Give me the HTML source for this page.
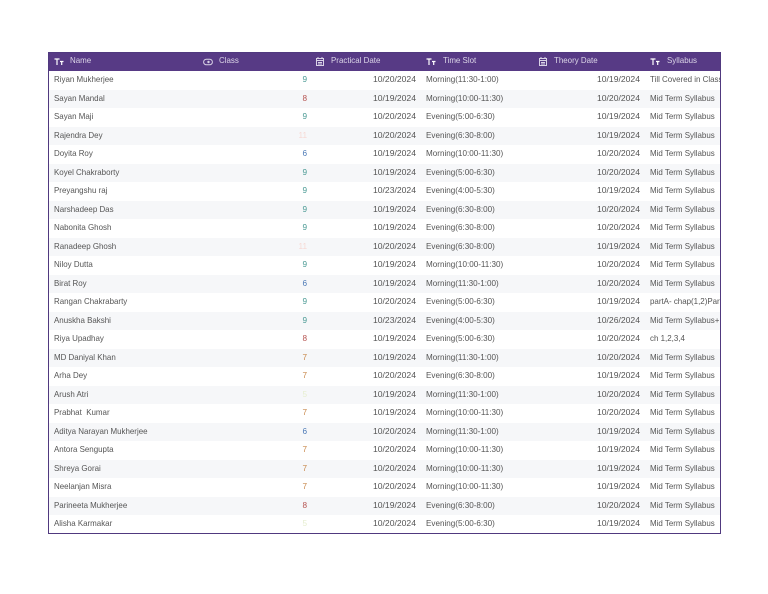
<!DOCTYPE html>
<html><head><meta charset="utf-8"><style>
html,body{margin:0;padding:0;background:#fff;width:768px;height:594px;overflow:hidden}
.w{position:absolute;left:48px;top:52px;width:671px;height:480px;border:1px solid #50397f;overflow:hidden;background:#fff;filter:blur(.3px)}
table{border-collapse:collapse;table-layout:fixed;width:671px;font:7.95px "Liberation Sans",sans-serif;color:#555}
th{background:#573a85;color:#dcd6e8;font-weight:400;text-align:left;height:18px;padding:0 0 3px 5px;white-space:nowrap;overflow:hidden;box-sizing:border-box}
th svg{vertical-align:-3px;margin-right:7px}
th.n svg{margin-right:6px}
td{height:18.5px;padding:3px 5px 0;line-height:10px;vertical-align:baseline;box-sizing:border-box;white-space:nowrap;overflow:hidden}
tr:nth-child(even) td{background:#f6f7f9}
.r{text-align:right;font-size:8.6px}.c{text-align:right;padding-right:4px;font-size:8.2px}
td:nth-child(4){font-size:8.1px}
td:last-child{padding-right:0}
.a{color:#4a9a94}.b{color:#b5524f}.d{color:#f7d8d4}.e{color:#4a78b5}.f{color:#c98a4e}.g{color:#e6eecf}
</style></head><body>
<div class="w"><table>
<colgroup><col style="width:149px"><col style="width:113px"><col style="width:110px"><col style="width:113px"><col style="width:111px"><col style="width:75px"></colgroup>
<thead><tr>
<th class="n"><svg width="10" height="9" viewBox="0 0 10 9"><path d="M.5 2h5M3 2v6M6 4.5h3.5M7.7 4.5V8" stroke="#fff" stroke-width="1.2" fill="none"/></svg>Name</th>
<th class="n"><svg width="10" height="9" viewBox="0 0 10 9"><rect x=".6" y="2.2" width="8.8" height="5.6" rx="2.8" stroke="#d9d2e6" fill="none"/><circle cx="5.5" cy="5" r="1.2" fill="#d9d2e6"/></svg>Class</th>
<th><svg width="8" height="9" viewBox="0 0 8 9"><rect x=".5" y="1.5" width="7" height="7" stroke="#d9d2e6" fill="none"/><path d="M2 0v2M6 0v2M.5 3.5h7M2 5.5h4M2 7h4" stroke="#d9d2e6" fill="none"/></svg>Practical Date</th>
<th><svg width="10" height="9" viewBox="0 0 10 9"><path d="M.5 2h5M3 2v6M6 4.5h3.5M7.7 4.5V8" stroke="#fff" stroke-width="1.2" fill="none"/></svg>Time Slot</th>
<th><svg width="8" height="9" viewBox="0 0 8 9"><rect x=".5" y="1.5" width="7" height="7" stroke="#d9d2e6" fill="none"/><path d="M2 0v2M6 0v2M.5 3.5h7M2 5.5h4M2 7h4" stroke="#d9d2e6" fill="none"/></svg>Theory Date</th>
<th><svg width="10" height="9" viewBox="0 0 10 9"><path d="M.5 2h5M3 2v6M6 4.5h3.5M7.7 4.5V8" stroke="#fff" stroke-width="1.2" fill="none"/></svg>Syllabus</th>
</tr></thead>
<tbody>
<tr><td>Riyan Mukherjee</td><td class="c a">9</td><td class="r">10/20/2024</td><td>Morning(11:30-1:00)</td><td class="r">10/19/2024</td><td>Till Covered in Class</td></tr>
<tr><td>Sayan Mandal</td><td class="c b">8</td><td class="r">10/19/2024</td><td>Morning(10:00-11:30)</td><td class="r">10/20/2024</td><td>Mid Term Syllabus</td></tr>
<tr><td>Sayan Maji</td><td class="c a">9</td><td class="r">10/20/2024</td><td>Evening(5:00-6:30)</td><td class="r">10/19/2024</td><td>Mid Term Syllabus</td></tr>
<tr><td>Rajendra Dey</td><td class="c d">11</td><td class="r">10/20/2024</td><td>Evening(6:30-8:00)</td><td class="r">10/19/2024</td><td>Mid Term Syllabus</td></tr>
<tr><td>Doyita Roy</td><td class="c e">6</td><td class="r">10/19/2024</td><td>Morning(10:00-11:30)</td><td class="r">10/20/2024</td><td>Mid Term Syllabus</td></tr>
<tr><td>Koyel Chakraborty</td><td class="c a">9</td><td class="r">10/19/2024</td><td>Evening(5:00-6:30)</td><td class="r">10/20/2024</td><td>Mid Term Syllabus</td></tr>
<tr><td>Preyangshu raj</td><td class="c a">9</td><td class="r">10/23/2024</td><td>Evening(4:00-5:30)</td><td class="r">10/19/2024</td><td>Mid Term Syllabus</td></tr>
<tr><td>Narshadeep Das</td><td class="c a">9</td><td class="r">10/19/2024</td><td>Evening(6:30-8:00)</td><td class="r">10/20/2024</td><td>Mid Term Syllabus</td></tr>
<tr><td>Nabonita Ghosh</td><td class="c a">9</td><td class="r">10/19/2024</td><td>Evening(6:30-8:00)</td><td class="r">10/20/2024</td><td>Mid Term Syllabus</td></tr>
<tr><td>Ranadeep Ghosh</td><td class="c d">11</td><td class="r">10/20/2024</td><td>Evening(6:30-8:00)</td><td class="r">10/19/2024</td><td>Mid Term Syllabus</td></tr>
<tr><td>Niloy Dutta</td><td class="c a">9</td><td class="r">10/19/2024</td><td>Morning(10:00-11:30)</td><td class="r">10/20/2024</td><td>Mid Term Syllabus</td></tr>
<tr><td>Birat Roy</td><td class="c e">6</td><td class="r">10/19/2024</td><td>Morning(11:30-1:00)</td><td class="r">10/20/2024</td><td>Mid Term Syllabus</td></tr>
<tr><td>Rangan Chakrabarty</td><td class="c a">9</td><td class="r">10/20/2024</td><td>Evening(5:00-6:30)</td><td class="r">10/19/2024</td><td>partA- chap(1,2)Part</td></tr>
<tr><td>Anuskha Bakshi</td><td class="c a">9</td><td class="r">10/23/2024</td><td>Evening(4:00-5:30)</td><td class="r">10/26/2024</td><td>Mid Term Syllabus+</td></tr>
<tr><td>Riya Upadhay</td><td class="c b">8</td><td class="r">10/19/2024</td><td>Evening(5:00-6:30)</td><td class="r">10/20/2024</td><td>ch 1,2,3,4</td></tr>
<tr><td>MD Daniyal Khan</td><td class="c f">7</td><td class="r">10/19/2024</td><td>Morning(11:30-1:00)</td><td class="r">10/20/2024</td><td>Mid Term Syllabus</td></tr>
<tr><td>Arha Dey</td><td class="c f">7</td><td class="r">10/20/2024</td><td>Evening(6:30-8:00)</td><td class="r">10/19/2024</td><td>Mid Term Syllabus</td></tr>
<tr><td>Arush Atri</td><td class="c g">5</td><td class="r">10/19/2024</td><td>Morning(11:30-1:00)</td><td class="r">10/20/2024</td><td>Mid Term Syllabus</td></tr>
<tr><td>Prabhat&nbsp; Kumar</td><td class="c f">7</td><td class="r">10/19/2024</td><td>Morning(10:00-11:30)</td><td class="r">10/20/2024</td><td>Mid Term Syllabus</td></tr>
<tr><td>Aditya Narayan Mukherjee</td><td class="c e">6</td><td class="r">10/20/2024</td><td>Morning(11:30-1:00)</td><td class="r">10/19/2024</td><td>Mid Term Syllabus</td></tr>
<tr><td>Antora Sengupta</td><td class="c f">7</td><td class="r">10/20/2024</td><td>Morning(10:00-11:30)</td><td class="r">10/19/2024</td><td>Mid Term Syllabus</td></tr>
<tr><td>Shreya Gorai</td><td class="c f">7</td><td class="r">10/20/2024</td><td>Morning(10:00-11:30)</td><td class="r">10/19/2024</td><td>Mid Term Syllabus</td></tr>
<tr><td>Neelanjan Misra</td><td class="c f">7</td><td class="r">10/20/2024</td><td>Morning(10:00-11:30)</td><td class="r">10/19/2024</td><td>Mid Term Syllabus</td></tr>
<tr><td>Parineeta Mukherjee</td><td class="c b">8</td><td class="r">10/19/2024</td><td>Evening(6:30-8:00)</td><td class="r">10/20/2024</td><td>Mid Term Syllabus</td></tr>
<tr><td>Alisha Karmakar</td><td class="c g">5</td><td class="r">10/20/2024</td><td>Evening(5:00-6:30)</td><td class="r">10/19/2024</td><td>Mid Term Syllabus</td></tr>
</tbody></table></div>
</body></html>
